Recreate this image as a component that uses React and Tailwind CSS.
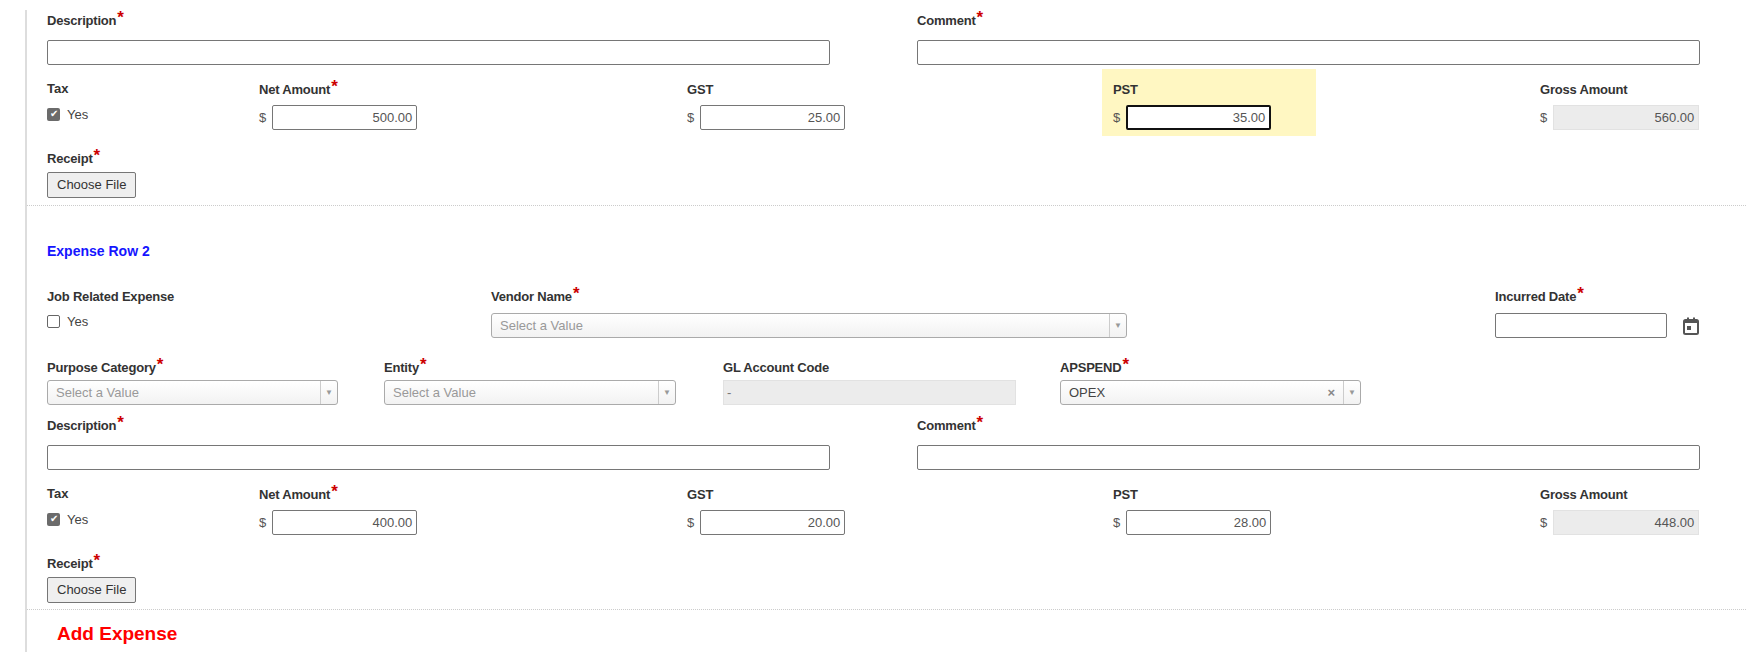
import React from "react";

const Star = () => <span className="text-[#c00] text-[17px] leading-none relative -top-[4px] ml-[1px]">*</span>;

const Label = ({ children, req }) => (
  <div className="h-[20px] flex items-end text-[13px] font-bold text-[#333] tracking-[-0.2px]">
    {children}
    {req && <Star />}
  </div>
);

const TextBox = ({ w, value = "", grey, focus }) => (
  <div
    className={`h-[25px] flex items-center justify-end pr-[4px] text-[13px] text-[#555] ${
      grey ? "bg-[#ececec] border border-[#e2e2e2]" : focus ? "bg-white border-2 border-[#111] rounded-[2px]" : "bg-white border border-[#767676] rounded-[2px]"
    }`}
    style={{ width: w }}
  >
    {value}
  </div>
);

const Money = ({ value, grey, focus }) => (
  <div className="flex items-center gap-[6px] mt-[6px] text-[13px] text-[#555]">
    <span>$</span>
    <TextBox w={grey ? 146 : 145} value={value} grey={grey} focus={focus} />
  </div>
);

const Select = ({ w, value, clear }) => (
  <div
    className="h-[25px] flex items-center border border-[#aaa] rounded-[3px] bg-gradient-to-b from-white to-[#f2f2f2] text-[13px]"
    style={{ width: w }}
  >
    <span className={`flex-1 pl-[8px] ${value ? "text-[#444]" : "text-[#999]"}`}>{value || "Select a Value"}</span>
    {clear && <span className="text-[#888] text-[13px] font-bold mr-[8px]">×</span>}
    <span className="w-[17px] h-full border-l border-[#ccc] flex items-center justify-center text-[#999] text-[8px]">▼</span>
  </div>
);

const Check = ({ checked }) => (
  <div className="flex items-center gap-[7px] mt-[6px] text-[13px] text-[#444]">
    {checked ? (
      <span className="w-[13px] h-[13px] rounded-[2px] bg-[#6b6b6b] text-white text-[10px] flex items-center justify-center leading-none">✔</span>
    ) : (
      <span className="w-[13px] h-[13px] rounded-[2px] border border-[#666] bg-white" />
    )}
    Yes
  </div>
);

const Block = ({ net, gst, pst, gross, focus }) => (
  <>
    <div className="flex mt-[10px]">
      <div className="w-[870px]">
        <Label req>Description</Label>
        <div className="mt-[10px]"><TextBox w={783} /></div>
      </div>
      <div>
        <Label req>Comment</Label>
        <div className="mt-[10px]"><TextBox w={783} /></div>
      </div>
    </div>
    <div className="flex mt-[12px]">
      <div className="w-[212px] pt-[2px]">
        <div className="text-[13px] font-bold text-[#333]">Tax</div>
        <Check checked />
      </div>
      <div className="w-[428px] pt-[2px]">
        <Label req>Net Amount</Label>
        <Money value={net} />
      </div>
      <div className="w-[426px] pt-[2px]">
        <Label>GST</Label>
        <Money value={gst} />
      </div>
      <div className="w-[427px]">
        <div className={`w-[214px] -ml-[11px] pl-[11px] pb-[6px] -mt-[8px] pt-[10px] ${focus ? "bg-[#fff7c2]" : ""}`}>
          <Label>PST</Label>
          <Money value={pst} focus={focus} />
        </div>
      </div>
      <div className="pt-[2px]">
        <Label>Gross Amount</Label>
        <Money value={gross} grey />
      </div>
    </div>
    <div className="mt-[12px]">
      <Label req>Receipt</Label>
      <button className="mt-[4px] h-[26px] px-[9px] border border-[#767676] rounded-[2px] bg-[#efefef] text-[13px] text-[#333]">Choose File</button>
    </div>
  </>
);

export default function App() {
  return (
    <div className="w-[1746px] h-[652px] overflow-hidden bg-white" style={{ fontFamily: "'Liberation Sans', Arial, sans-serif" }}>
      <div className="ml-[25px] border-l-2 border-[#ddd] h-full">
        <div className="pl-[20px]">
          <Block net="500.00" gst="25.00" pst="35.00" gross="560.00" focus />
        </div>
        <div className="mt-[7px] border-t border-dotted border-[#ccc]" />
        <div className="pl-[20px]">
          <div className="mt-[35px] text-[14px] font-bold text-[#1515ff]">Expense Row 2</div>
          <div className="flex mt-[24px]">
            <div className="w-[444px]">
              <Label>Job Related Expense</Label>
              <Check />
            </div>
            <div className="w-[1004px]">
              <Label req>Vendor Name</Label>
              <div className="mt-[7px]"><Select w={636} /></div>
            </div>
            <div>
              <Label req>Incurred Date</Label>
              <div className="mt-[7px] flex items-center gap-[16px]">
                <TextBox w={172} />
                <svg width="16" height="18" viewBox="0 0 16 18">
                  <rect x="1" y="3" width="14" height="14" rx="1.5" fill="none" stroke="#555" strokeWidth="2" />
                  <rect x="1" y="3" width="14" height="3" fill="#555" />
                  <rect x="4" y="0.5" width="2" height="4" fill="#555" />
                  <rect x="10" y="0.5" width="2" height="4" fill="#555" />
                  <rect x="4" y="9" width="4" height="4" fill="#555" />
                </svg>
              </div>
            </div>
          </div>
          <div className="flex mt-[19px]">
            <div className="w-[337px]">
              <Label req>Purpose Category</Label>
              <div className="mt-[3px]"><Select w={291} /></div>
            </div>
            <div className="w-[339px]">
              <Label req>Entity</Label>
              <div className="mt-[3px]"><Select w={292} /></div>
            </div>
            <div className="w-[337px]">
              <Label>GL Account Code</Label>
              <div className="mt-[3px] w-[293px] h-[25px] bg-[#ececec] border border-[#e2e2e2] text-[13px] text-[#777] pl-[3px] flex items-center">-</div>
            </div>
            <div>
              <Label req>APSPEND</Label>
              <div className="mt-[3px]"><Select w={301} value="OPEX" clear /></div>
            </div>
          </div>
          <Block net="400.00" gst="20.00" pst="28.00" gross="448.00" />
        </div>
        <div className="mt-[6px] border-t border-dotted border-[#ccc]" />
        <div className="pl-[30px] mt-[10px] text-[19px] font-bold text-[#f00]">Add Expense</div>
      </div>
    </div>
  );
}
